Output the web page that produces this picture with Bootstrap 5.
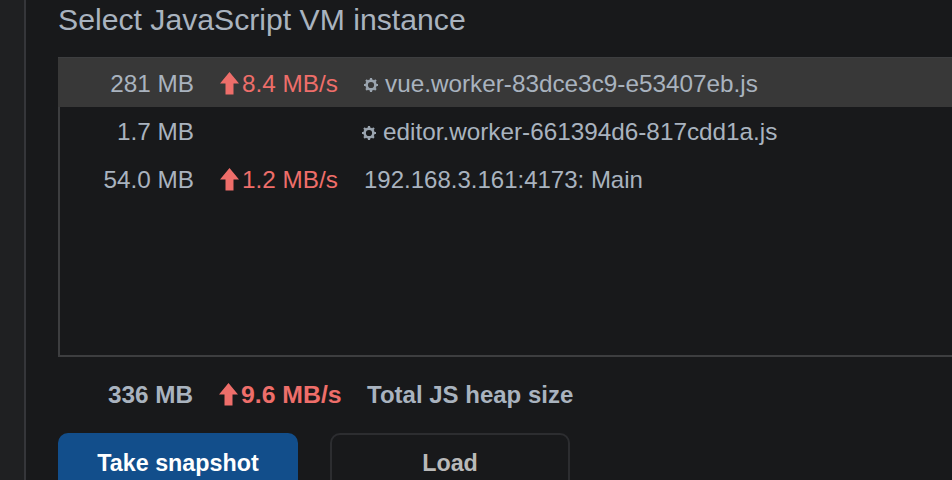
<!DOCTYPE html>
<html lang="en"><head><meta charset="utf-8"><title>Memory</title>
<link href="https://cdn.jsdelivr.net/npm/bootstrap@5.3.0/dist/css/bootstrap.min.css" rel="stylesheet">
<style>
html,body{height:480px;overflow:hidden;background:#18191b}
body{font-family:"Liberation Sans",Arial,sans-serif;color:#a9b3bf;font-size:24.3px}
.shell{height:480px;overflow:hidden}
.rail{width:26px;background:#1f2022;border-right:2px solid #35363a;flex:none}
.pane{padding:0 0 0 32px;min-width:0;flex:1}
.heading{font-size:30.200px;line-height:40px;font-weight:400;margin:0 0 17px;color:#a9b3bf;height:40px}
.vmlist{height:300px;border:2px solid #3d3e40;border-right:0}
.vmrow{height:48px;line-height:50px}
.vmrow.picked{background:#383838;margin:-1px 0 0 -2px;height:49px;padding-left:2px;line-height:52px}
.size{width:134px;text-align:right;flex:none}
.rate{width:170px;padding-left:26px;color:#ee6e6a;flex:none;white-space:nowrap}
.rate svg{margin-right:3px;vertical-align:-3px}
.gear{margin-right:6px;vertical-align:-1px;margin-left:-1px}
.gear2{margin-left:-3px}
.gear circle{fill:none;stroke:#9aa4af;stroke-width:2.600px}
.gear path{stroke:#9aa4af;stroke-width:2.200px;stroke-dasharray:2.500 9 2.500}
.vmname{white-space:nowrap}
.hostname{font-size:24px}
.totals{height:76px;line-height:76px;font-weight:700;color:#a9b3bf}
.totals .size{width:135px;padding-left:1px}
.totals .rate{width:174px;font-size:24.800px}
.totals .vmname{font-size:24px}
.sumrate{color:#ee6e6a}
.btn.snap{width:240px;height:60px;background:#124e8b;border:0;border-radius:10px;color:#fff;font-size:23.300px;font-weight:700;padding:0;line-height:58px}
.btn.loadbtn{width:240px;height:60px;background:transparent;border:2px solid #2c2d30;border-radius:10px;color:#b9b9b9;font-size:23.300px;font-weight:700;padding:0;line-height:54px;margin-left:32px}
</style></head><body>
<div class="shell d-flex">
<div class="rail"></div>
<div class="pane">
<h1 class="heading">Select JavaScript VM instance</h1>
<div class="vmlist">
<div class="vmrow picked d-flex"><div class="size">281 MB</div><div class="rate"><svg width="19" height="23" viewBox="0 0 19 23"><path d="M9.500 0 19 11.500H13.500V22.500H5.500V11.500H0Z" fill="#ee6e6a"/></svg>8.4 MB/s</div><div class="vmname"><svg class="gear" width="16" height="16" viewBox="0 0 16 16"><circle cx="8" cy="8" r="4.400"/><path d="M8 1v14M1 8h14M3 3l10 10M13 3 3 13"/></svg>vue.worker-83dce3c9-e53407eb.js</div></div>
<div class="vmrow d-flex"><div class="size">1.7 MB</div><div class="rate"></div><div class="vmname"><svg class="gear gear2" width="16" height="16" viewBox="0 0 16 16"><circle cx="8" cy="8" r="4.400"/><path d="M8 1v14M1 8h14M3 3l10 10M13 3 3 13"/></svg>editor.worker-661394d6-817cdd1a.js</div></div>
<div class="vmrow d-flex"><div class="size">54.0 MB</div><div class="rate"><svg width="19" height="23" viewBox="0 0 19 23"><path d="M9.500 0 19 11.500H13.500V22.500H5.500V11.500H0Z" fill="#ee6e6a"/></svg>1.2 MB/s</div><div class="vmname hostname">192.168.3.161:4173: Main</div></div>
</div>
<div class="totals d-flex"><div class="size">336 MB</div><div class="rate sumrate"><svg width="19" height="23" viewBox="0 0 19 23"><path d="M9.500 0 19 11.500H13.500V22.500H5.500V11.500H0Z" fill="#ee6e6a"/></svg>9.6 MB/s</div><div class="vmname">Total JS heap size</div></div>
<div class="d-flex"><button class="btn snap" type="button">Take snapshot</button><button class="btn loadbtn" type="button">Load</button></div>
</div></div>
</body></html>
